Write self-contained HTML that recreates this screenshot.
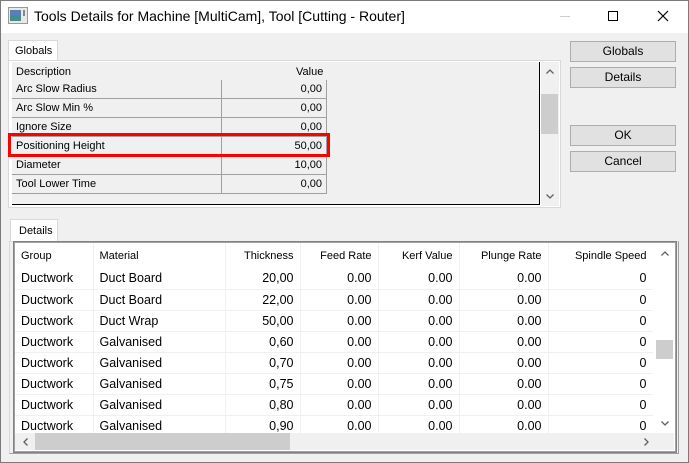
<!DOCTYPE html>
<html><head><meta charset="utf-8"><style>
*{margin:0;padding:0;box-sizing:border-box}
body{width:689px;height:463px;overflow:hidden;background:#f0f0f0;font-family:"Liberation Sans",sans-serif;color:#000;position:relative}
.a{position:absolute}
.win{left:0;top:0;width:689px;height:463px;border:1px solid #7a7a7a;}
.title{left:1px;top:1px;width:687px;height:32px;background:#fff}
.btn{position:absolute;left:570px;width:106px;height:21px;background:#e1e1e1;border:1px solid #adadad;font-size:12px;text-align:center;line-height:19px}
.pr{position:absolute;left:12px;width:315px;height:19px;font-size:11px;line-height:19px;border-bottom:1px solid #a0a0a0}
.pr .n{position:absolute;left:4px;top:0}
.pr .v{position:absolute;left:209px;top:0;width:106px;height:18px;border-left:1px solid #a0a0a0;border-right:1px solid #a0a0a0;text-align:right;padding-right:4px}
table{border-collapse:collapse;position:absolute;left:15px;top:243px}
td{height:21px;font-size:12.5px;border-right:1px solid #f0f0f0;border-bottom:1px solid #f0f0f0;padding:0 6px;white-space:nowrap;background:#fff}
th{height:25px;font-size:11px;font-weight:normal;text-align:left;padding:0 6px;border-right:1px solid #f0f0f0;background:#fff}
.r{text-align:right}
</style></head><body>
<div class="a win"></div>
<div class="a title"></div>
<svg class="a" style="left:8px;top:7px" width="20" height="17" viewBox="0 0 20 17"><rect x="0.5" y="0.5" width="19" height="16" fill="#e8e8e8" stroke="#999"/><rect x="2" y="3" width="11" height="11" fill="#4a8a8a"/><rect x="2" y="3" width="11" height="5" fill="#5a7fb0"/><rect x="15" y="3" width="2" height="6" fill="#888"/></svg>
<div class="a" style="left:34px;top:8px;font-size:14px;color:#000">Tools Details for Machine [MultiCam], Tool [Cutting - Router]</div>
<div class="a" style="left:560px;top:16px;width:10px;height:1px;background:#ccc"></div>
<div class="a" style="left:608px;top:11px;width:10px;height:10px;border:1px solid #000"></div>
<svg class="a" style="left:657px;top:10px" width="12" height="12"><path d="M1 1L11 11M11 1L1 11" stroke="#000" stroke-width="1.2"/></svg>

<div class="a" style="left:8px;top:40px;width:50px;height:21px;background:#fff;border:1px solid #d9d9d9;border-bottom:none;font-size:11px;padding:4px 0 0 6px">Globals</div>
<div class="a" style="left:8px;top:60px;width:553px;height:148px;border:1px solid #d9d9d9;background:#fff"></div>
<div class="a" style="left:12px;top:62px;width:528px;height:143px;background:#f0f0f0;border-right:1px solid #000;border-bottom:1px solid #000"></div>
<div class="a" style="left:16px;top:66px;font-size:11px">Description</div>
<div class="a" style="left:296px;top:66px;font-size:11px">Value</div>
<div class="pr" style="top:80px"><span class="n">Arc Slow Radius</span><span class="v">0,00</span></div>
<div class="pr" style="top:99px"><span class="n">Arc Slow Min %</span><span class="v">0,00</span></div>
<div class="pr" style="top:118px"><span class="n">Ignore Size</span><span class="v">0,00</span></div>
<div class="pr" style="top:137px"><span class="n">Positioning Height</span><span class="v">50,00</span></div>
<div class="pr" style="top:156px"><span class="n">Diameter</span><span class="v">10,00</span></div>
<div class="pr" style="top:175px"><span class="n">Tool Lower Time</span><span class="v">0,00</span></div>
<div class="a" style="left:8px;top:133px;width:322px;height:24px;border:3px solid #f00"></div>
<div class="a" style="left:541px;top:62px;width:18px;height:144px;background:#f0f0f0"></div>
<div class="a" style="left:541px;top:94px;width:17px;height:40px;background:#cdcdcd"></div>
<svg class="a" style="left:546px;top:69px" width="8" height="5"><path d="M0.5 4.5L4 1L7.5 4.5" fill="none" stroke="#606060" stroke-width="1.3"/></svg>
<svg class="a" style="left:546px;top:194px" width="8" height="5"><path d="M0.5 0.5L4 4L7.5 0.5" fill="none" stroke="#606060" stroke-width="1.3"/></svg>

<div class="btn" style="top:41px">Globals</div>
<div class="btn" style="top:67px">Details</div>
<div class="btn" style="top:125px">OK</div>
<div class="btn" style="top:151px">Cancel</div>

<div class="a" style="left:10px;top:219px;width:48px;height:23px;background:#fff;border:1px solid #d9d9d9;border-bottom:none;font-size:11px;padding:5px 0 0 8px">Details</div>
<div class="a" style="left:9px;top:241px;width:670px;height:213px;border:1px solid #d9d9d9;border-right-color:#a0a0a0;border-bottom-color:#a0a0a0;background:#f0f0f0"></div>
<div class="a" style="left:13px;top:241px;width:664px;height:212px;border:1px solid #828282;background:#fff"></div>
<div class="a" style="left:14px;top:242px;width:662px;height:210px;border:1px solid #a0a0a0;background:#fff"></div>
<table>
<tr><th style="width:78px">Group</th><th style="width:132px">Material</th><th class="r" style="width:75px">Thickness</th><th class="r" style="width:78px">Feed Rate</th><th class="r" style="width:81px">Kerf Value</th><th class="r" style="width:89px">Plunge Rate</th><th class="r" style="width:105px">Spindle Speed</th></tr>
<tr><td>Ductwork</td><td>Duct Board</td><td class="r">20,00</td><td class="r">0.00</td><td class="r">0.00</td><td class="r">0.00</td><td class="r">0</td></tr>
<tr><td>Ductwork</td><td>Duct Board</td><td class="r">22,00</td><td class="r">0.00</td><td class="r">0.00</td><td class="r">0.00</td><td class="r">0</td></tr>
<tr><td>Ductwork</td><td>Duct Wrap</td><td class="r">50,00</td><td class="r">0.00</td><td class="r">0.00</td><td class="r">0.00</td><td class="r">0</td></tr>
<tr><td>Ductwork</td><td>Galvanised</td><td class="r">0,60</td><td class="r">0.00</td><td class="r">0.00</td><td class="r">0.00</td><td class="r">0</td></tr>
<tr><td>Ductwork</td><td>Galvanised</td><td class="r">0,70</td><td class="r">0.00</td><td class="r">0.00</td><td class="r">0.00</td><td class="r">0</td></tr>
<tr><td>Ductwork</td><td>Galvanised</td><td class="r">0,75</td><td class="r">0.00</td><td class="r">0.00</td><td class="r">0.00</td><td class="r">0</td></tr>
<tr><td>Ductwork</td><td>Galvanised</td><td class="r">0,80</td><td class="r">0.00</td><td class="r">0.00</td><td class="r">0.00</td><td class="r">0</td></tr>
<tr><td>Ductwork</td><td>Galvanised</td><td class="r">0,90</td><td class="r">0.00</td><td class="r">0.00</td><td class="r">0.00</td><td class="r">0</td></tr>
</table>
<div class="a" style="left:653px;top:243px;width:21px;height:190px;background:#fff"></div>
<div class="a" style="left:656px;top:340px;width:17px;height:19px;background:#cdcdcd"></div>
<div class="a" style="left:15px;top:433px;width:659px;height:17px;background:#f0f0f0"></div>
<div class="a" style="left:35px;top:433px;width:255px;height:17px;background:#cdcdcd"></div>
<svg class="a" style="left:23px;top:438px" width="5" height="8"><path d="M4.5 0.5L1 4L4.5 7.5" fill="none" stroke="#606060" stroke-width="1.3"/></svg>
<svg class="a" style="left:644px;top:438px" width="5" height="8"><path d="M0.5 0.5L4 4L0.5 7.5" fill="none" stroke="#606060" stroke-width="1.3"/></svg>
<svg class="a" style="left:661px;top:251px" width="8" height="5"><path d="M0.5 4.5L4 1L7.5 4.5" fill="none" stroke="#606060" stroke-width="1.3"/></svg>
<svg class="a" style="left:661px;top:421px" width="8" height="5"><path d="M0.5 0.5L4 4L7.5 0.5" fill="none" stroke="#606060" stroke-width="1.3"/></svg>
</body></html>
